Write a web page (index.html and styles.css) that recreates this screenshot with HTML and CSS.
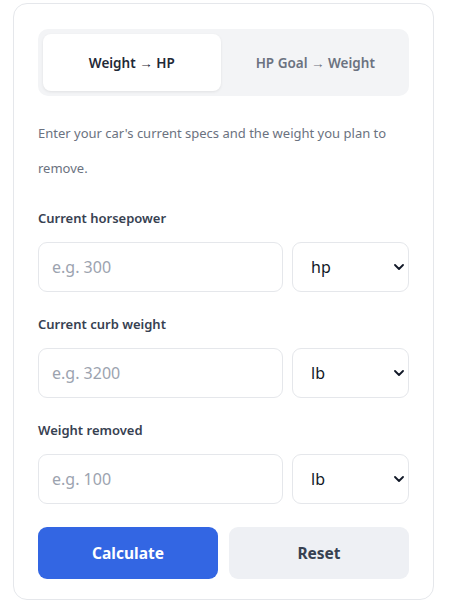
FILE: index.html
```html
<!DOCTYPE html>
<html lang="en">
<head>
    <meta charset="UTF-8">
    <meta name="viewport" content="width=device-width, initial-scale=1.0">
    <title>Weight to HP Calculator</title>
    <link rel="stylesheet" href="styles.css">
</head>
<body>
    <div class="card">
        <div class="tabs">
            <button class="tab active">Weight → HP</button>
            <button class="tab">HP Goal → Weight</button>
        </div>

        <p class="intro">Enter your car's current specs and the weight you plan to remove.</p>

        <div class="field">
            <label for="hp">Current horsepower</label>
            <div class="row">
                <input id="hp" type="text" placeholder="e.g. 300">
                <div class="unit">
                    <select>
                        <option>hp</option>
                        <option>kW</option>
                    </select>
                    <svg viewBox="0 0 10 6" width="10" height="6"><path d="M1 1l4 4 4-4" fill="none" stroke="#111827" stroke-width="1.8" stroke-linecap="round" stroke-linejoin="round"/></svg>
                </div>
            </div>
        </div>

        <div class="field">
            <label for="weight">Current curb weight</label>
            <div class="row">
                <input id="weight" type="text" placeholder="e.g. 3200">
                <div class="unit">
                    <select>
                        <option>lb</option>
                        <option>kg</option>
                    </select>
                    <svg viewBox="0 0 10 6" width="10" height="6"><path d="M1 1l4 4 4-4" fill="none" stroke="#111827" stroke-width="1.8" stroke-linecap="round" stroke-linejoin="round"/></svg>
                </div>
            </div>
        </div>

        <div class="field">
            <label for="removed">Weight removed</label>
            <div class="row">
                <input id="removed" type="text" placeholder="e.g. 100">
                <div class="unit">
                    <select>
                        <option>lb</option>
                        <option>kg</option>
                    </select>
                    <svg viewBox="0 0 10 6" width="10" height="6"><path d="M1 1l4 4 4-4" fill="none" stroke="#111827" stroke-width="1.8" stroke-linecap="round" stroke-linejoin="round"/></svg>
                </div>
            </div>
        </div>

        <div class="actions">
            <button class="btn primary">Calculate</button>
            <button class="btn secondary">Reset</button>
        </div>
    </div>
</body>
</html>
```

FILE: styles.css
```css
body {
    font-family: "Noto Sans", "Open Sans", sans-serif;
    margin: 0;
    padding: 3px 16px 0 13px;
    background-color: #fff;
    color: #1f2937;
}
.card {
    border: 1px solid #e5e7eb;
    border-radius: 14px;
    padding: 25px 24px 20px 24px;
    background: #fff;
}
.tabs {
    display: flex;
    gap: 6px;
    padding: 5px;
    background: #f3f4f6;
    border-radius: 10px;
}
.tab {
    flex: 1;
    height: 57px;
    border: none;
    border-radius: 8px;
    background: transparent;
    font-family: inherit;
    font-size: 13.5px;
    font-weight: 600;
    color: #6b7280;
    cursor: pointer;
}
.tab.active {
    background: #fff;
    color: #1f2937;
    box-shadow: 0 1px 3px rgba(0, 0, 0, 0.08);
}
.intro {
    margin: 20px 0 22px;
    font-size: 13px;
    line-height: 35px;
    color: #6b7280;
}
.field {
    margin-bottom: 22px;
}
.field label {
    display: block;
    font-size: 13px;
    font-weight: 600;
    line-height: 20px;
    color: #374151;
    margin-bottom: 14px;
}
.row {
    display: flex;
    gap: 9px;
}
.row input {
    flex: 1;
    min-width: 0;
    height: 50px;
    box-sizing: border-box;
    border: 1px solid #e5e7eb;
    border-radius: 9px;
    padding: 0 13px;
    font-family: inherit;
    font-size: 16px;
    color: #111827;
}
.row input::placeholder {
    color: #9ca3af;
}
.unit {
    position: relative;
    width: 117px;
}
.unit select {
    appearance: none;
    width: 100%;
    height: 50px;
    box-sizing: border-box;
    border: 1px solid #e5e7eb;
    border-radius: 9px;
    padding: 0 18px;
    background: #fff;
    font-family: inherit;
    font-size: 16px;
    color: #111827;
}
.unit svg {
    position: absolute;
    right: 5px;
    top: 22px;
    pointer-events: none;
}
.actions {
    display: flex;
    gap: 11px;
    padding-top: 1px;
}
.btn {
    flex: 1;
    height: 52px;
    border: none;
    border-radius: 9px;
    font-family: inherit;
    font-size: 15.5px;
    font-weight: 700;
    cursor: pointer;
}
.primary {
    background: #3366e3;
    color: #fff;
}
.secondary {
    background: #eef0f4;
    color: #374151;
}
```
